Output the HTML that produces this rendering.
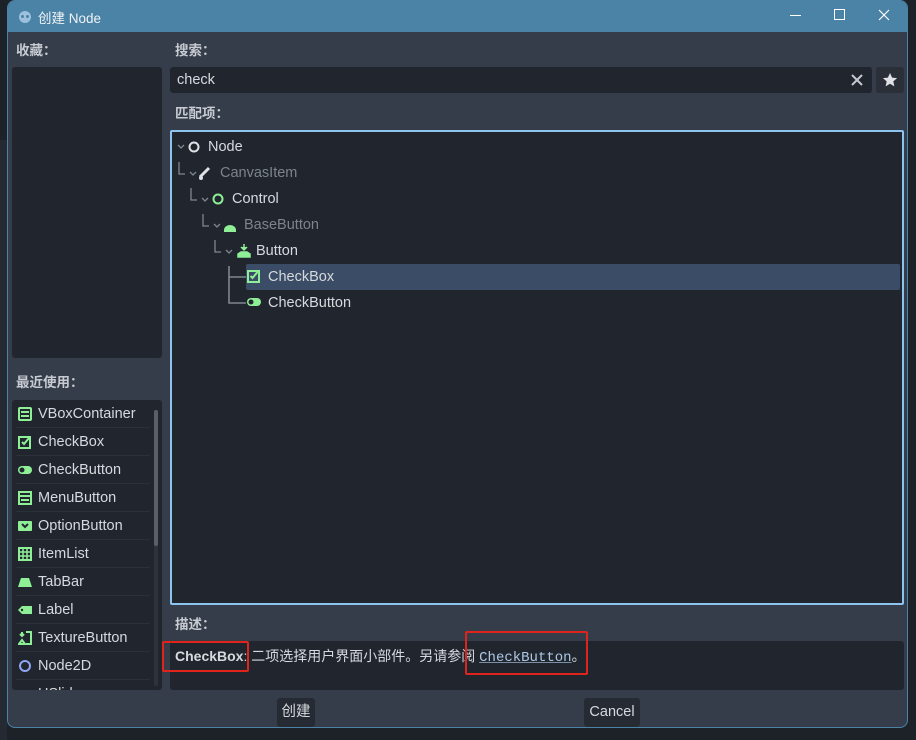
<!DOCTYPE html>
<html><head><meta charset="utf-8"><style>
*{margin:0;padding:0;box-sizing:border-box}
body{width:916px;height:739px;background:#1d2229;position:relative;overflow:hidden;font-family:"Liberation Sans","Noto Sans CJK SC",sans-serif;font-size:14.5px;color:#d6d9de}
.a{position:absolute}
.lbl{font-weight:bold;color:#c8ccd2;font-size:13.5px}
.panel{background:#21262e;border-radius:3px}
.row{position:absolute;height:26px;line-height:26px;white-space:nowrap}
.ri{position:absolute;left:4px;height:28px;line-height:28px;width:134px;border-bottom:1px solid #2b313a;white-space:nowrap}
.ri svg{position:absolute;left:2px;top:7px}
.ri span{position:absolute;left:22px}
.dim{color:#7d838c}
.btn{position:absolute;background:#262b33;border-radius:3px;text-align:center;line-height:29px;height:29px;color:#d6d9de}
.red{position:absolute;border:2px solid #e0241c;border-radius:2px}
</style></head><body>
<div class="a" style="left:0;top:140px;width:7px;height:600px;background:#252a32"></div>
<div class="a" style="left:7px;top:0;width:901px;height:728px;background:#363d4a;border-radius:8px;border:1px solid #4a83a6;overflow:hidden">
<div class="a" style="left:0;top:0;width:901px;height:31px;background:#4a83a6"></div>
</div>
<svg class="a" style="left:17px;top:8px" width="16" height="16" viewBox="0 0 16 16"><circle cx="8" cy="9" r="6" fill="#9dc0dc"/><circle cx="5.5" cy="8.5" r="1.5" fill="#4a83a6"/><circle cx="10.5" cy="8.5" r="1.5" fill="#4a83a6"/></svg>
<div class="a" style="left:38px;top:7px;font-size:13.5px;color:#f0f3f6">创建 Node</div>
<div class="a" style="left:790px;top:15px;width:11px;height:1px;background:#fff"></div>
<div class="a" style="left:834px;top:9px;width:11px;height:11px;border:1px solid #fff"></div>
<svg class="a" style="left:878px;top:9px" width="12" height="12"><path d="M1 1L11 11M11 1L1 11" stroke="#fff" stroke-width="1.2"/></svg>

<div class="a lbl" style="left:16px;top:39px">收藏：</div>
<div class="a panel" style="left:12px;top:67px;width:150px;height:291px"></div>
<div class="a lbl" style="left:16px;top:371px">最近使用：</div>
<div class="a panel" style="left:12px;top:400px;width:150px;height:290px;overflow:hidden">
<div class="a" style="left:142px;top:10px;width:4px;height:276px;background:#2d333c;border-radius:2px"></div>
<div class="a" style="left:142px;top:10px;width:4px;height:136px;background:#5a606a;border-radius:2px"></div>
<div class="ri" style="top:0"><svg width="14" height="14"><rect x="1" y="1" width="12" height="12" rx="1" fill="none" stroke="#8eef97" stroke-width="2"/><path d="M3 5h8M3 9h8" stroke="#8eef97" stroke-width="2"/></svg><span>VBoxContainer</span></div>
<div class="ri" style="top:28px"><svg width="14" height="14"><rect x="1" y="2" width="11" height="11" fill="none" stroke="#8eef97" stroke-width="2"/><path d="M4 7l2 2 5-6" stroke="#8eef97" stroke-width="2" fill="none"/></svg><span>CheckBox</span></div>
<div class="ri" style="top:56px"><svg width="14" height="14"><rect x="0" y="3" width="14" height="8" rx="4" fill="#8eef97"/><circle cx="4" cy="7" r="2.5" fill="#21262e"/></svg><span>CheckButton</span></div>
<div class="ri" style="top:84px"><svg width="14" height="14"><rect x="1" y="1" width="12" height="12" fill="none" stroke="#8eef97" stroke-width="2"/><path d="M1 5h12M3 9h8" stroke="#8eef97" stroke-width="2"/></svg><span>MenuButton</span></div>
<div class="ri" style="top:112px"><svg width="14" height="14"><rect x="0" y="2" width="14" height="10" rx="1" fill="#8eef97"/><path d="M4 5l3 3 3-3" stroke="#21262e" stroke-width="2" fill="none"/></svg><span>OptionButton</span></div>
<div class="ri" style="top:140px"><svg width="14" height="14"><rect x="1" y="1" width="12" height="12" fill="none" stroke="#8eef97" stroke-width="2"/><path d="M5 2v10M9 2v10M2 5h10M2 9h10" stroke="#8eef97" stroke-width="1.5"/></svg><span>ItemList</span></div>
<div class="ri" style="top:168px"><svg width="14" height="14"><path d="M0 12L3 3h8l3 9z" fill="#8eef97"/></svg><span>TabBar</span></div>
<div class="ri" style="top:196px"><svg width="14" height="14"><path d="M0 7L4 3h10v8H4z" fill="#8eef97"/><circle cx="4" cy="7" r="1.2" fill="#21262e"/></svg><span>Label</span></div>
<div class="ri" style="top:224px"><svg width="14" height="14"><path d="M8 1h5v12H8M1 13l3-4 3 4z" fill="none" stroke="#8eef97" stroke-width="2"/><path d="M4 1v4M2 3l2 2 2-2" stroke="#8eef97" stroke-width="2" fill="none"/></svg><span>TextureButton</span></div>
<div class="ri" style="top:252px"><svg width="14" height="14"><circle cx="7" cy="7" r="5" fill="none" stroke="#8da5f3" stroke-width="2"/></svg><span>Node2D</span></div>
<div class="ri" style="top:280px"><span>HSlider</span></div>
</div>

<div class="a lbl" style="left:175px;top:39px">搜索：</div>
<div class="a panel" style="left:170px;top:67px;width:702px;height:26px"></div>
<div class="a" style="left:177px;top:72px">check</div>
<svg class="a" style="left:851px;top:74px" width="12" height="12"><path d="M1 1L11 11M11 1L1 11" stroke="#c5c8cd" stroke-width="2"/></svg>
<div class="a panel" style="left:876px;top:67px;width:28px;height:26px;background:#2a2f38"></div>
<svg class="a" style="left:882px;top:72px" width="16" height="16" viewBox="0 0 16 16"><path d="M8 1l2.1 4.6 5 .5-3.8 3.3 1.1 5L8 11.8 3.6 14.4l1.1-5L.9 6.1l5-.5z" fill="#e0e2e5"/></svg>

<div class="a lbl" style="left:175px;top:102px">匹配项：</div>
<div class="a" style="left:170px;top:130px;width:734px;height:475px;background:#21262e;border:2px solid #8ec3f0;border-radius:2px"></div>
<div class="a" style="left:246px;top:264px;width:654px;height:26px;background:#3b4d66;border-radius:2px"></div>
<svg class="a" style="left:172px;top:132px" width="200" height="180">
<g stroke="#80868f" stroke-width="1.3" fill="none">
<path d="M6 13l3 3 3-3M18 40l3 3 3-3M30 66l3 3 3-3M42 92l3 3 3-3M54 118l3 3 3-3"/>
<path d="M7 30v12h6M19 56v12h6M31 82v12h6M43 108v12h6"/>
<path d="M57 134v11h17M57 145v26h17" stroke-width="1.6"/>
</g>
<circle cx="22" cy="15" r="4.5" fill="none" stroke="#e0e2e5" stroke-width="2"/>
<path d="M28 45l9-9" stroke="#e0e2e5" stroke-width="3"/><circle cx="29" cy="46" r="2" fill="#e0e2e5"/>
<circle cx="46" cy="67" r="4.5" fill="none" stroke="#8eef97" stroke-width="2"/>
<path d="M52 98a6 5 0 0 1 12 0v2H52z" fill="#8eef97"/>
<path d="M66 125h12v-3l-3-2h-6l-3 2zM72 112v6M69 115l3 3 3-3" fill="#8eef97" stroke="#8eef97" stroke-width="1.5"/>
<rect x="76" y="139" width="11" height="11" fill="none" stroke="#8eef97" stroke-width="2"/><path d="M78.5 144l2 2 5-6" stroke="#8eef97" stroke-width="2" fill="none"/>
<rect x="75" y="166" width="14" height="8" rx="4" fill="#8eef97"/><circle cx="79" cy="170" r="2.5" fill="#21262e"/>
</svg>
<div class="row" style="left:208px;top:134px">Node</div>
<div class="row dim" style="left:220px;top:160px">CanvasItem</div>
<div class="row" style="left:232px;top:186px">Control</div>
<div class="row dim" style="left:244px;top:212px">BaseButton</div>
<div class="row" style="left:256px;top:238px">Button</div>
<div class="row" style="left:268px;top:264px">CheckBox</div>
<div class="row" style="left:268px;top:290px">CheckButton</div>

<div class="a lbl" style="left:175px;top:613px">描述：</div>
<div class="a panel" style="left:170px;top:641px;width:734px;height:49px"></div>
<div class="a" style="left:175px;top:646px;font-size:14px;white-space:nowrap"><b>CheckBox</b>: 二项选择用户界面小部件。另请参阅 <span style="font-family:'Liberation Mono',monospace;color:#aec8e6;text-decoration:underline;text-decoration-color:#7a8ea6;font-size:14px">CheckButton</span>。</div>
<div class="red" style="left:162px;top:641px;width:87px;height:31px"></div>
<div class="red" style="left:465px;top:631px;width:123px;height:44px"></div>

<div class="btn" style="left:277px;top:698px;width:38px">创建</div>
<div class="btn" style="left:584px;top:698px;width:56px">Cancel</div>
</body></html>
